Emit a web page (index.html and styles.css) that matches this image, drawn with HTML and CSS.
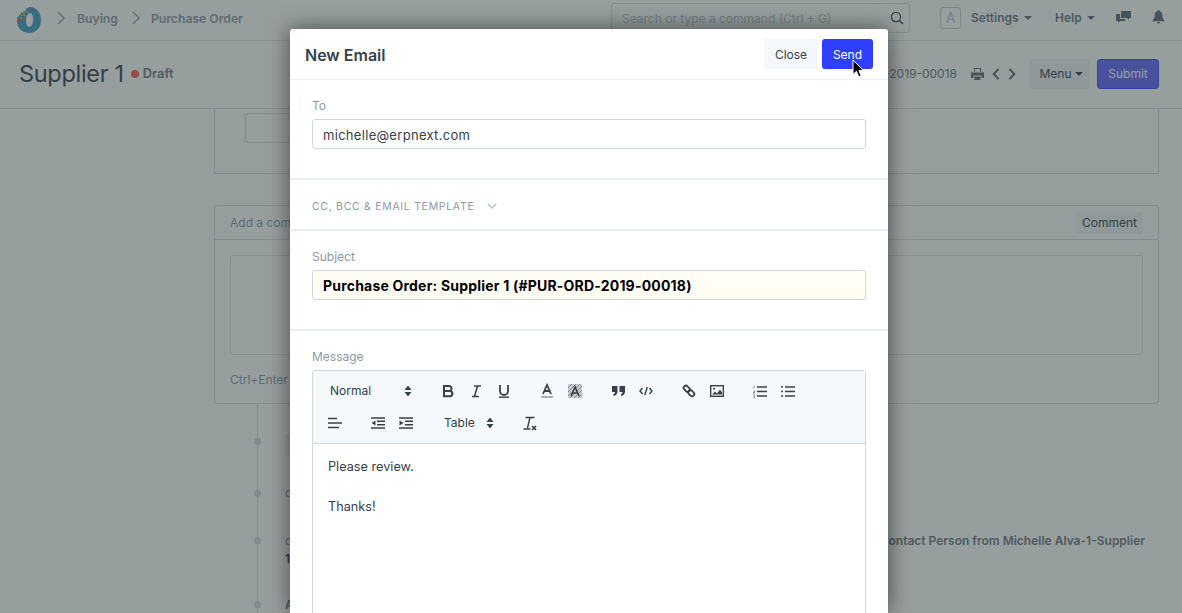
FILE: index.html
```html
<!DOCTYPE html>
<html lang="en">
<head>
  <meta charset="UTF-8" />
  <title>New Email</title>
  <link rel="stylesheet" href="styles.css">
</head>
<body>
  <div class="navbar">
    <svg class="logo" width="26" height="28" viewBox="0 0 26 28">
      <path fill="#3f9fc0" fill-rule="evenodd" d="M14 1c6 0 11 5 11 13s-5 13-12 13C6 27 1 22 1 15 1 12 3 9 5 7c1-1 2 0 2 1v0c2-3 4-7 7-7zm0 6c-2 0-4 3-4 7s1 7 3 7 4-3 4-7-1-7-3-7z"/>
      <g>
        <rect x="1" y="11" width="2" height="2" fill="#d96a6a"/><rect x="1" y="14" width="2" height="2" fill="#d95a5a"/>
        <rect x="4" y="8" width="2" height="2" fill="#d9a94a"/><rect x="4" y="11" width="2" height="2" fill="#c9b94a"/><rect x="4" y="14" width="2" height="2" fill="#d96060"/><rect x="4" y="17" width="2" height="2" fill="#d46a6a"/>
        <rect x="7" y="5" width="2" height="2" fill="#9ec36a"/><rect x="7" y="8" width="2" height="2" fill="#c4c35a"/><rect x="7" y="11" width="2" height="2" fill="#d96a6a"/>
        <rect x="10" y="2" width="2" height="2" fill="#7fbfa0"/><rect x="10" y="5" width="2" height="2" fill="#b08fc9"/>
        <rect x="13" y="1" width="2" height="2" fill="#b060b0"/><rect x="15" y="3" width="2" height="2" fill="#9060c0"/>
      </g>
    </svg>
    <svg class="crumb-sep" width="9" height="14" viewBox="0 0 9 14"><path d="M1 1l6 6-6 6" fill="none" stroke="#8d99a6" stroke-width="1.3"/></svg>
    <a class="crumb">Buying</a>
    <svg class="crumb-sep" width="9" height="14" viewBox="0 0 9 14"><path d="M1 1l6 6-6 6" fill="none" stroke="#8d99a6" stroke-width="1.3"/></svg>
    <a class="crumb">Purchase Order</a>
    <div class="search">
      <span>Search or type a command (Ctrl + G)</span>
      <svg width="14" height="14" viewBox="0 0 14 14"><circle cx="6" cy="6" r="4.6" fill="none" stroke="#36414c" stroke-width="1.2"/><path d="M9.4 9.4L13 13" stroke="#36414c" stroke-width="1.4"/></svg>
    </div>
    <div class="avatar">A</div>
    <a class="nav-link settings">Settings<i class="caret"></i></a>
    <a class="nav-link help">Help<i class="caret"></i></a>
    <svg class="nav-chat" width="15" height="13" viewBox="0 0 15 13"><path fill="#5c6b75" d="M5 0h10v7h-2v2l-2-2H5z"/><path fill="#5c6b75" d="M0 3h4v5h5v2H4l-2 2v-2H0z"/></svg>
    <svg class="nav-bell" width="13" height="14" viewBox="0 0 13 14"><path fill="#5c6b75" d="M6.5 0C7.2 0 7.6.5 7.6 1.2 9.5 1.7 10.4 3.2 10.4 5.2c0 3 .8 4 2.1 5.3v.8H.5v-.8C1.800 9.200 2.600 8.200 2.600 5.200c0-2 .9-3.500 2.800-4C5.400.5 5.800 0 6.500 0zM5 12h3c0 1-.6 1.700-1.500 1.700S5 13 5 12z"/></svg>
  </div>

  <div class="page-head">
    <h1>Supplier 1</h1>
    <i class="status-dot"></i>
    <span class="status">Draft</span>
    <span class="doc-name">PUR-ORD-2019-00018</span>
    <svg class="head-icon print" width="13" height="12" viewBox="0 0 13 12"><path fill="#5c6b75" d="M3 0h7v4H9V1H4v3H3zM0 4.500h13V10h-2.500V7.500h-8V10H0zM3.500 8.500h6V12h-6z"/></svg>
    <svg class="head-icon prev" width="8" height="12" viewBox="0 0 8 12"><path d="M6.500 1L1.800 6l4.700 5" fill="none" stroke="#5c6b75" stroke-width="2"/></svg>
    <svg class="head-icon next" width="8" height="12" viewBox="0 0 8 12"><path d="M1.500 1l4.700 5-4.700 5" fill="none" stroke="#5c6b75" stroke-width="2"/></svg>
    <button class="btn-menu">Menu<i class="caret dark"></i></button>
    <button class="btn-submit">Submit</button>
  </div>

  <div class="layout">
    <div class="main">
      <div class="card-top"><div class="top-btn"></div></div>
      <div class="comment-card">
        <div class="comment-head">
          <span>Add a comment</span>
          <button class="btn-comment">Comment</button>
        </div>
        <div class="comment-body">
          <div class="comment-area"></div>
          <div class="comment-hint">Ctrl+Enter to add comment</div>
        </div>
      </div>
      <div class="timeline">
        <div class="tl-item first"><i class="tl-dot"></i><div class="tl-box"></div></div>
        <div class="tl-item second"><i class="tl-dot"></i><span class="tl-muted">created</span></div>
        <div class="tl-item third">
          <i class="tl-dot"></i>
          <div class="tl-row">
            <span class="tl-muted">c</span>
            <b>Linked Contact Person from Michelle Alva-1-Supplier</b>
          </div>
          <b class="tl-sub">1</b>
        </div>
        <div class="tl-item fourth"><i class="tl-dot"></i><b>Administrator</b></div>
      </div>
    </div>
  </div>

  <div class="backdrop"></div>

  <div class="modal">
    <div class="modal-head">
      <h4>New Email</h4>
      <button class="btn-close">Close</button>
      <button class="btn-send">Send</button>
    </div>

    <div class="section">
      <label>To</label>
      <div class="input">michelle@erpnext.com</div>
    </div>

    <div class="section-toggle">
      <span>CC, BCC &amp; EMAIL TEMPLATE</span>
      <svg width="10" height="6" viewBox="0 0 10 6"><path d="M.7.700L5 5 9.300.700" fill="none" stroke="#b8c2cc" stroke-width="1.400"/></svg>
    </div>

    <div class="section">
      <label>Subject</label>
      <div class="input subject">Purchase Order: Supplier 1 (#PUR-ORD-2019-00018)</div>
    </div>

    <div class="section message">
      <label>Message</label>
      <div class="editor">
        <div class="toolbar">
          <div class="tool-row">
            <div class="picker normal">Normal<svg width="8" height="12" viewBox="0 0 8 12"><path fill="#36414c" d="M4 .5L7.500 5H.5zM4 11.500L.5 7h7z"/></svg></div>
            <div class="group">
              <span class="tool"><svg width="14" height="14" viewBox="0 0 14 14"><path d="M3 2h5a2.500 2.500 0 0 1 0 5H3zM3 7h5.800a2.600 2.600 0 0 1 0 5.200H3z" fill="none" stroke="#36414c" stroke-width="2"/></svg></span>
              <span class="tool"><svg width="14" height="14" viewBox="0 0 14 14"><path d="M5 2h7M3 12.500h7M8.500 2l-3 10.500" fill="none" stroke="#36414c" stroke-width="1.500"/></svg></span>
              <span class="tool"><svg width="14" height="14" viewBox="0 0 14 14"><path d="M3 1v6a4 4 0 0 0 8 0V1" fill="none" stroke="#36414c" stroke-width="1.800"/><path d="M2 13.200h10" stroke="#36414c" stroke-width="1.400"/></svg></span>
            </div>
            <div class="group">
              <span class="tool"><svg width="14" height="16" viewBox="0 0 14 16"><path d="M3 11l4-9 4 9M4.500 8h5" fill="none" stroke="#36414c" stroke-width="1.800"/><path d="M1 14h12" stroke="#98a1a8" stroke-width="1.600"/></svg></span>
              <span class="tool"><svg width="14" height="14" viewBox="0 0 14 14"><rect width="14" height="14" fill="#c8ccd0"/><path d="M0 4L4 0M0 8L8 0M0 12L12 0M2 14L14 2M6 14l8-8M10 14l4-4" stroke="#5c6b75" stroke-width=".7"/><path d="M3 12l4-9 4 9M4.500 9h5" fill="none" stroke="#36414c" stroke-width="1.600"/></svg></span>
            </div>
            <div class="group">
              <span class="tool"><svg width="13" height="10" viewBox="0 0 13 10"><path fill="#36414c" d="M0 0h5.500v5.500C5.500 8 4 9.500 1.500 10V8C2.500 7.800 3 7 3 6H0zM7.500 0H13v5.500C13 8 11.500 9.500 9 10V8c1-.2 1.500-1 1.500-2h-3z"/></svg></span>
              <span class="tool"><svg width="14" height="10" viewBox="0 0 14 10"><path d="M3.500 2L1 5l2.500 3M10.500 2L13 5l-2.500 3M8.300 1L5.800 9" fill="none" stroke="#36414c" stroke-width="1.400"/></svg></span>
            </div>
            <div class="group">
              <span class="tool"><svg width="14" height="14" viewBox="0 0 14 14"><g fill="none" stroke="#36414c" stroke-width="1.800"><rect x="-3.500" y="-2.200" width="7" height="4.400" rx="2.200" transform="translate(4.800 4.800) rotate(45)"/><rect x="-3.500" y="-2.200" width="7" height="4.400" rx="2.200" transform="translate(9.200 9.200) rotate(45)"/></g></svg></span>
              <span class="tool"><svg width="14" height="12" viewBox="0 0 14 12"><rect x=".7" y=".7" width="12.600" height="10.600" fill="none" stroke="#36414c" stroke-width="1.400"/><path fill="#36414c" d="M2 9.500l3-3 2 2 3-4 2 3v2z"/><circle cx="4" cy="3.800" r="1" fill="#36414c"/></svg></span>
            </div>
            <div class="group">
              <span class="tool"><svg width="14" height="13" viewBox="0 0 14 13"><path d="M4 2h10M4 6.500h10M4 11h10" stroke="#36414c" stroke-width="1.500"/><path d="M1 .5v3M.3 6h1.400v1.500H.3v1.500h1.400M.3 10.500h1.400V13H.3" fill="none" stroke="#5c6b75" stroke-width=".7"/></svg></span>
              <span class="tool"><svg width="14" height="13" viewBox="0 0 14 13"><path d="M4 2h10M4 6.500h10M4 11h10" stroke="#36414c" stroke-width="1.500"/><path d="M0 2h2M0 6.500h2M0 11h2" stroke="#36414c" stroke-width="1.500"/></svg></span>
            </div>
          </div>
          <div class="tool-row">
            <div class="group">
              <span class="tool"><svg width="14" height="12" viewBox="0 0 14 12"><path d="M0 1.500h9M0 6h14M0 10.500h11" stroke="#36414c" stroke-width="1.600"/></svg></span>
            </div>
            <div class="group">
              <span class="tool"><svg width="14" height="12" viewBox="0 0 14 12"><path d="M0 1h14M6 4.300h8M6 7.700h8M0 11h14" stroke="#36414c" stroke-width="1.500"/><path fill="#36414c" d="M4.500 3.500v5L.5 6z"/></svg></span>
              <span class="tool"><svg width="14" height="12" viewBox="0 0 14 12"><path d="M0 1h14M6 4.300h8M6 7.700h8M0 11h14" stroke="#36414c" stroke-width="1.500"/><path fill="#36414c" d="M.5 3.500v5L4.500 6z"/></svg></span>
            </div>
            <div class="picker table">Table<svg width="8" height="12" viewBox="0 0 8 12"><path fill="#36414c" d="M4 .5L7.500 5H.5zM4 11.500L.5 7h7z"/></svg></div>
            <div class="group">
              <span class="tool"><svg width="14" height="15" viewBox="0 0 14 15"><path d="M2.500 1.500h9M7 1.500L4.500 12M0.500 13h7" fill="none" stroke="#36414c" stroke-width="1.400"/><path d="M9 10l4 4M13 10l-4 4" stroke="#36414c" stroke-width="1.600"/></svg></span>
            </div>
          </div>
        </div>
        <div class="editor-body">
          <p>Please review.</p>
          <p>&nbsp;</p>
          <p>Thanks!</p>
        </div>
      </div>
    </div>
  </div>

  <svg class="pointer" width="13" height="20" viewBox="0 0 13 20"><path d="M1 1v14.500l3.400-3.200 2.300 5.400 2.500-1-2.300-5.300h4.600z" fill="#000" stroke="#fff" stroke-width="1"/></svg>
</body>
</html>
```

FILE: styles.css
```css
* {
  box-sizing: border-box;
}

html, body {
  height: 613px;
}

body {
  font-family: Inter, "Noto Sans", sans-serif;
  font-size: 12px;
  color: #36414c;
  background: #fff;
  margin: 0;
  overflow: hidden;
  position: relative;
}

button {
  font-family: inherit;
  font-size: 12px;
  border: none;
  border-radius: 3px;
  padding: 0;
}

.caret {
  display: inline-block;
  border-top: 4px solid #5c6b75;
  border-left: 4px solid transparent;
  border-right: 4px solid transparent;
  margin-left: 5px;
  vertical-align: 2px;
}

.caret.dark {
  border-top-color: #36414c;
  margin-left: 3px;
}

/* navbar */
.navbar {
  height: 41px;
  display: flex;
  align-items: center;
  border-bottom: 1px solid #dfe4e8;
  padding: 0 0 4px 16px;
}

.logo {
  margin: 4px 15px 0 0;
}

.crumb-sep {
  margin-right: 11px;
}

.crumb {
  font-size: 12.2px;
  font-weight: 600;
  color: #8d99a6;
  margin-right: 14px;
}

.crumb-sep + .crumb + .crumb-sep {
  margin-right: 10px;
}

.search {
  position: absolute;
  left: 611px;
  top: 3px;
  width: 299px;
  height: 30px;
  border: 1px solid #d1d8dd;
  border-radius: 3px;
  display: flex;
  align-items: center;
  justify-content: space-between;
  padding: 0 5px 0 10px;
  color: #b8c2cc;
}

.avatar {
  position: absolute;
  left: 940px;
  top: 7px;
  width: 21px;
  height: 22px;
  border: 1px solid #c8cfd5;
  border-radius: 3px;
  color: #b8c2cc;
  font-size: 14px;
  text-align: center;
  line-height: 20px;
}

.nav-link {
  position: absolute;
  top: 10px;
  font-weight: 600;
  color: #6c7680;
}

.settings { left: 971px; }
.help { left: 1055px; }
.nav-chat { position: absolute; left: 1116px; top: 11px; }
.nav-bell { position: absolute; left: 1152px; top: 10px; }

/* page head */
.page-head {
  height: 68px;
  display: flex;
  align-items: center;
  padding: 0 23px 2px 19px;
  border-bottom: 1px solid #d1d8dd;
}

.page-head h1 {
  font-size: 23.5px;
  font-weight: 400;
  margin: 0;
  letter-spacing: -.3px;
}

.status-dot {
  width: 8px;
  height: 8px;
  border-radius: 50%;
  background: #ff5858;
  margin: 0 4px 0 7px;
}

.status {
  font-size: 12.8px;
  font-weight: 600;
  color: #6c7680;
}

.doc-name {
  margin-left: auto;
  color: #6c7680;
  margin-right: 14px;
}

.head-icon { margin-right: 8px; }
.head-icon.next { margin-right: 13px; }
.head-icon.prev { margin-right: 8px; }

.btn-menu {
  width: 61px;
  height: 30px;
  background: #f0f4f7;
  color: #36414c;
  margin-right: 7px;
  padding-left: 3px;
}

.btn-submit {
  width: 62px;
  height: 30px;
  background: #5e64ff;
  border: 1px solid #444bff;
  color: #fff;
}

/* page body */
.layout {
  padding-left: 214px;
  padding-right: 23px;
}

.card-top {
  height: 65px;
  border: 1px solid #d1d8dd;
  border-top: none;
  padding: 4px 0 0 30px;
}

.top-btn {
  width: 60px;
  height: 30px;
  border: 1px solid #d1d8dd;
  border-radius: 3px;
}

.comment-card {
  margin-top: 31px;
  height: 199px;
  border: 1px solid #d1d8dd;
  border-radius: 3px;
}

.comment-head {
  height: 34px;
  display: flex;
  align-items: center;
  justify-content: space-between;
  padding: 0 15px;
  border-bottom: 1px solid #d1d8dd;
  color: #8d99a6;
}

.btn-comment {
  width: 67px;
  height: 22px;
  background: #f0f4f7;
  color: #36414c;
}

.comment-body {
  padding: 15px;
}

.comment-area {
  height: 100px;
  border: 1px solid #dfe4e8;
  border-radius: 3px;
}

.comment-hint {
  margin-top: 17px;
  color: #8d99a6;
}

.timeline {
  margin-left: 43px;
  border-left: 1px solid #d1d8dd;
  height: 209px;
  padding-right: 14px;
}

.tl-item {
  position: relative;
  padding-left: 27px;
}

.tl-item.first { height: 80px; padding-top: 30px; }
.tl-item.second { height: 47px; padding-top: 1px; }
.tl-item.third { height: 64px; padding-top: 2px; }
.tl-item.fourth { height: 18px; padding-top: 2px; }

.tl-dot {
  position: absolute;
  left: -4px;
  top: 6px;
  width: 7px;
  height: 7px;
  border-radius: 50%;
  background: #d1d8dd;
}

.tl-item.first .tl-dot { top: 34px; }

.tl-box {
  width: 60px;
  height: 22px;
  background: #f0f4f7;
}

.tl-muted {
  color: #8d99a6;
}

.tl-row {
  display: flex;
  justify-content: space-between;
}

.tl-row b, .tl-sub, .tl-item.fourth b {
  font-weight: 600;
  color: #6c7680;
}

.tl-sub {
  display: block;
  margin-top: 3px;
  color: #36414c;
}

/* modal */
.backdrop {
  position: absolute;
  inset: 0;
  background: rgba(48, 62, 62, .5);
}

.modal {
  position: absolute;
  left: 290px;
  top: 29px;
  width: 598px;
  height: 584px;
  overflow: hidden;
  background: #fff;
  border-radius: 3px 3px 0 0;
  box-shadow: 0 0 22px rgba(0, 0, 0, .55);
}

.modal-head {
  height: 51px;
  display: flex;
  align-items: center;
  gap: 4px;
  padding: 0 15px;
  border-bottom: 1px solid #ebeff2;
}

.modal-head h4 {
  margin: 2px auto 0 0;
  font-size: 16px;
  font-weight: 600;
}

.btn-close {
  width: 54px;
  height: 30px;
  background: #f5f7fa;
  color: #36414c;
}

.btn-send {
  width: 51px;
  height: 30px;
  background: #2f3fff;
  color: #fff;
}

.section {
  height: 100px;
  padding: 18px 22px 0;
  border-bottom: 2px solid #ebeff2;
}

.section label {
  display: block;
  color: #8d99a6;
  line-height: 16px;
  margin-bottom: 5px;
}

.input {
  height: 30px;
  border: 1px solid #d1d8dd;
  border-radius: 3px;
  padding: 0 10px;
  font-size: 13px;
  letter-spacing: .3px;
  line-height: 30px;
}

.input.subject {
  background: #fffdf4;
  font-size: 14px;
  font-weight: 700;
  letter-spacing: .2px;
  color: #000;
}

.section-toggle {
  height: 51px;
  display: flex;
  align-items: center;
  gap: 13px;
  padding: 3px 22px 0;
  border-bottom: 2px solid #ebeff2;
  font-size: 10.5px;
  letter-spacing: .7px;
  color: #8d99a6;
}

.section.message {
  border-bottom: none;
}

.editor {
  border: 1px solid #d1d8dd;
  border-radius: 3px;
  height: 400px;
}

.toolbar {
  height: 73px;
  padding: 4px 8px;
  background: #f5f9fc;
  border-bottom: 1px solid #d1d8dd;
}

.tool-row {
  height: 32px;
  display: flex;
  align-items: center;
  gap: 15px;
}

.group {
  display: flex;
}

.tool {
  width: 28px;
  height: 32px;
  display: flex;
  align-items: center;
  justify-content: center;
}

.picker {
  height: 32px;
  display: flex;
  align-items: center;
  justify-content: space-between;
  padding: 0 7px 2px 9px;
}

.picker svg {
  margin-top: 2px;
}

.picker.normal { width: 98px; }
.picker.table { width: 66px; }

.editor-body {
  padding: 13px 15px;
  font-size: 12.7px;
  line-height: 20px;
}

.editor-body p {
  margin: 0;
}

.pointer {
  position: absolute;
  left: 852px;
  top: 59px;
}
```
